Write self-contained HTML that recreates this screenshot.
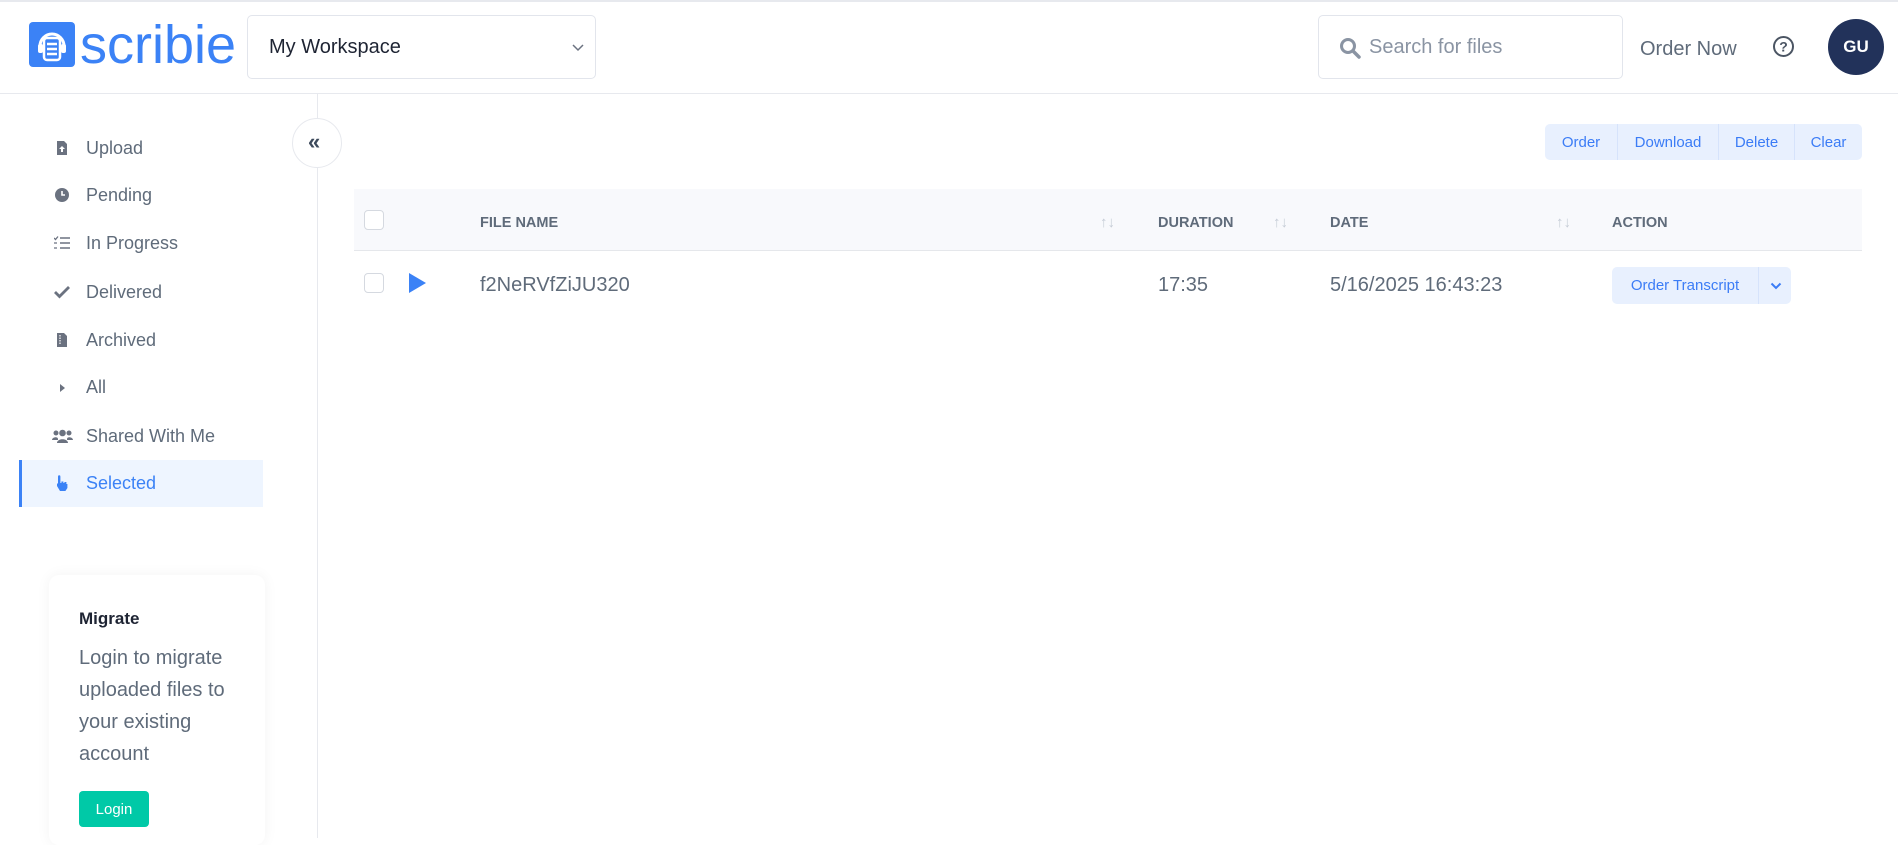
<!DOCTYPE html>
<html><head><meta charset="utf-8"><style>
*{box-sizing:border-box;margin:0;padding:0}
body{width:1898px;height:838px;overflow:hidden;background:#fff;font-family:"Liberation Sans",sans-serif;color:#5f6b7a;position:relative}
.abs{position:absolute}
.hdr{left:0;top:0;width:1898px;height:94px;border-top:2px solid #e7e9ee;border-bottom:1px solid #e7e9ee}
.logo{left:29px;top:22px;width:46px;height:45px;background:#3b82f6;border-radius:4px}
.brand{left:80px;top:14px;font-size:54px;color:#3b82f6;letter-spacing:0px}
.ws{left:247px;top:15px;width:349px;height:64px;border:1px solid #e2e5ec;border-radius:5px}
.ws span{position:absolute;left:21px;top:20px;font-size:20px;color:#1e2433}
.search{left:1318px;top:15px;width:305px;height:64px;border:1px solid #e2e5ec;border-radius:5px}
.search span{position:absolute;left:50px;top:20px;font-size:20px;color:#8a94a3}
.side{left:317px;top:94px;width:1px;height:744px;background:#e7e9ee}
.menu{left:86px;font-size:18px;color:#5f6b7a}
.ico{left:54px;width:16px;height:16px}
.sel{left:19px;top:460px;width:244px;height:47px;background:#eef5ff;border-left:3px solid #3b82f6}
.coll{left:292px;top:118px;width:50px;height:50px;border:1px solid #e7e9ee;border-radius:50%;background:#fff}
.btns{left:1545px;top:124px;width:317px;height:36px;background:#e8f0fe;border-radius:5px;display:flex;font-size:15px;color:#3b7cf6}
.btns div{display:flex;align-items:center;justify-content:center;border-right:1px solid #d6e3fb}
.th{left:354px;top:189px;width:1508px;height:62px;background:#f8f9fc;border-bottom:1px solid #e5e7eb}
.lbl{font-size:14.5px;font-weight:bold;color:#5f6b7a;top:215px}
.cb{width:20px;height:20px;border:1px solid #d5d9e0;border-radius:4px;background:#fff}
.cell{font-size:20px;color:#5f6b7a;top:274px}
.sort{font-size:15px;color:#c5ccd6;top:214px}
.ot{left:1612px;top:267px;width:179px;height:37px;background:#e8f0fe;border-radius:5px;font-size:15px;color:#3b7cf6}
.card{left:49px;top:575px;width:216px;height:270px;background:#fff;box-shadow:0 0 14px rgba(0,0,0,.05);border-radius:10px}
</style></head><body>
<div class="abs hdr"></div>
<div class="abs logo"><svg width="46" height="45" viewBox="0 0 46 45"><path d="M11 24a12 12 0 0 1 24 0" stroke="#fff" stroke-width="3" fill="none"/><rect x="9" y="22" width="5" height="9" rx="2" fill="#fff"/><rect x="32" y="22" width="5" height="9" rx="2" fill="#fff"/><rect x="15" y="16" width="16" height="22" rx="3" fill="none" stroke="#fff" stroke-width="2.5"/><path d="M18 22h10M18 27h10M18 32h10" stroke="#fff" stroke-width="2.5"/></svg></div>
<div class="abs brand">scribie</div>
<div class="abs ws"><span>My Workspace</span><svg class="abs" style="left:324px;top:28px" width="12" height="8"><path d="M1 1l5 5 5-5" stroke="#6b7280" fill="none" stroke-width="1.5"/></svg></div>
<div class="abs search"><svg class="abs" style="left:20px;top:21px" width="22" height="22"><circle cx="9" cy="9" r="6.5" stroke="#8a94a3" stroke-width="3" fill="none"/><path d="M14 14l6 6" stroke="#8a94a3" stroke-width="3.5" stroke-linecap="round"/></svg><span>Search for files</span></div>
<div class="abs" style="left:1640px;top:38px;font-size:20px;color:#5f6b7a">Order Now</div>
<svg class="abs" style="left:1772px;top:35px" width="23" height="23"><circle cx="11.5" cy="11.5" r="9.5" stroke="#4b5563" stroke-width="2" fill="none"/><text x="11.5" y="16.5" font-size="14" font-weight="bold" text-anchor="middle" fill="#4b5563" font-family="Liberation Sans">?</text></svg>
<div class="abs" style="left:1828px;top:19px;width:56px;height:56px;border-radius:50%;background:#22325a;color:#fff;font-weight:bold;font-size:17px;display:flex;align-items:center;justify-content:center">GU</div>
<div class="abs side"></div>
<div class="abs coll"><div style="position:absolute;left:15px;top:10px;font-size:22px;font-weight:bold;color:#3d4a5c">«</div></div>
<div class="abs sel"></div>
<svg class="abs ico" style="top:140px" viewBox="0 0 16 16"><path d="M3 1h7l3 3v11H3z" fill="#6b7280"/><path d="M8 6l-3 3h2v3h2V9h2z" fill="#fff"/></svg>
<div class="abs menu" style="top:138px">Upload</div>
<svg class="abs ico" style="top:187px" viewBox="0 0 16 16"><circle cx="8" cy="8" r="7" fill="#6b7280"/><path d="M8 4v4h3" stroke="#fff" stroke-width="1.6" fill="none"/></svg>
<div class="abs menu" style="top:185px">Pending</div>
<svg class="abs ico" style="top:235px" viewBox="0 0 16 16"><path d="M6 3h10M6 8h10M6 13h10" stroke="#6b7280" stroke-width="1.5"/><path d="M0 3l1.5 1.5L4 1.5M0 8h3M0 13h3" stroke="#6b7280" stroke-width="1.3" fill="none"/></svg>
<div class="abs menu" style="top:233px">In Progress</div>
<svg class="abs ico" style="top:284px" viewBox="0 0 16 16"><path d="M1 8l4.5 4.5L15 3" stroke="#6b7280" stroke-width="2.8" fill="none"/></svg>
<div class="abs menu" style="top:282px">Delivered</div>
<svg class="abs ico" style="top:332px" viewBox="0 0 16 16"><path d="M3 1h7l3 3v11H3z" fill="#6b7280"/><path d="M6 3v9" stroke="#fff" stroke-width="1.2" stroke-dasharray="1.5 1"/></svg>
<div class="abs menu" style="top:330px">Archived</div>
<svg class="abs ico" style="top:380px" viewBox="0 0 16 16"><path d="M6 4l5 4-5 4z" fill="#6b7280"/></svg>
<div class="abs menu" style="top:377px">All</div>
<svg class="abs" style="left:52px;top:428px" width="21" height="16" viewBox="0 0 21 16"><circle cx="10.5" cy="5" r="3.3" fill="#6b7280"/><circle cx="4" cy="5" r="2.5" fill="#6b7280"/><circle cx="17" cy="5" r="2.5" fill="#6b7280"/><path d="M5 15c0-5 11-5 11 0z M0 12c0-3 6-4 6-1v1zM21 12c0-3-6-4-6-1v1z" fill="#6b7280"/></svg>
<div class="abs menu" style="top:426px">Shared With Me</div>
<svg class="abs ico" style="top:475px" viewBox="0 0 16 16"><path d="M4 1.5a1.2 1.2 0 0 1 2.4 0V8h1V6.5h2V8h1V7h2v2h1v4l-2 3H6L3 11V8l1 1z" fill="#3b82f6"/></svg>
<div class="abs menu" style="top:473px;color:#3b82f6">Selected</div>
<div class="abs card"></div>
<div class="abs" style="left:79px;top:609px;font-size:17px;font-weight:bold;color:#1e2433">Migrate</div>
<div class="abs" style="left:79px;top:642px;width:180px;font-size:20px;line-height:32px;color:#5f6b7a">Login to migrate uploaded files to your existing account</div>
<div class="abs" style="left:79px;top:791px;width:70px;height:36px;background:#00c9a7;border-radius:4px;color:#fff;font-size:15px;display:flex;align-items:center;justify-content:center">Login</div>
<div class="abs btns"><div style="width:73px">Order</div><div style="width:101px">Download</div><div style="width:76px">Delete</div><div style="width:67px;border:0">Clear</div></div>
<div class="abs th"></div>
<div class="abs cb" style="left:364px;top:210px"></div>
<div class="abs lbl" style="left:480px">FILE NAME</div>
<div class="abs sort" style="left:1100px">↑↓</div>
<div class="abs lbl" style="left:1158px">DURATION</div>
<div class="abs sort" style="left:1273px">↑↓</div>
<div class="abs lbl" style="left:1330px">DATE</div>
<div class="abs sort" style="left:1556px">↑↓</div>
<div class="abs lbl" style="left:1612px">ACTION</div>
<div class="abs cb" style="left:364px;top:273px"></div>
<svg class="abs" style="left:408px;top:272px" width="20" height="22"><path d="M1 1l17 10L1 21z" fill="#3b82f6"/></svg>
<div class="abs cell" style="left:480px">f2NeRVfZiJU320</div>
<div class="abs cell" style="left:1158px">17:35</div>
<div class="abs cell" style="left:1330px">5/16/2025 16:43:23</div>
<div class="abs ot"><div style="position:absolute;left:0;top:0;width:147px;height:37px;border-right:1px solid #d6e3fb;display:flex;align-items:center;justify-content:center">Order Transcript</div><svg class="abs" style="left:158px;top:15px" width="12" height="8"><path d="M1.5 1.5l4.5 4.5 4.5-4.5" stroke="#3b7cf6" fill="none" stroke-width="2"/></svg></div>
</body></html>
